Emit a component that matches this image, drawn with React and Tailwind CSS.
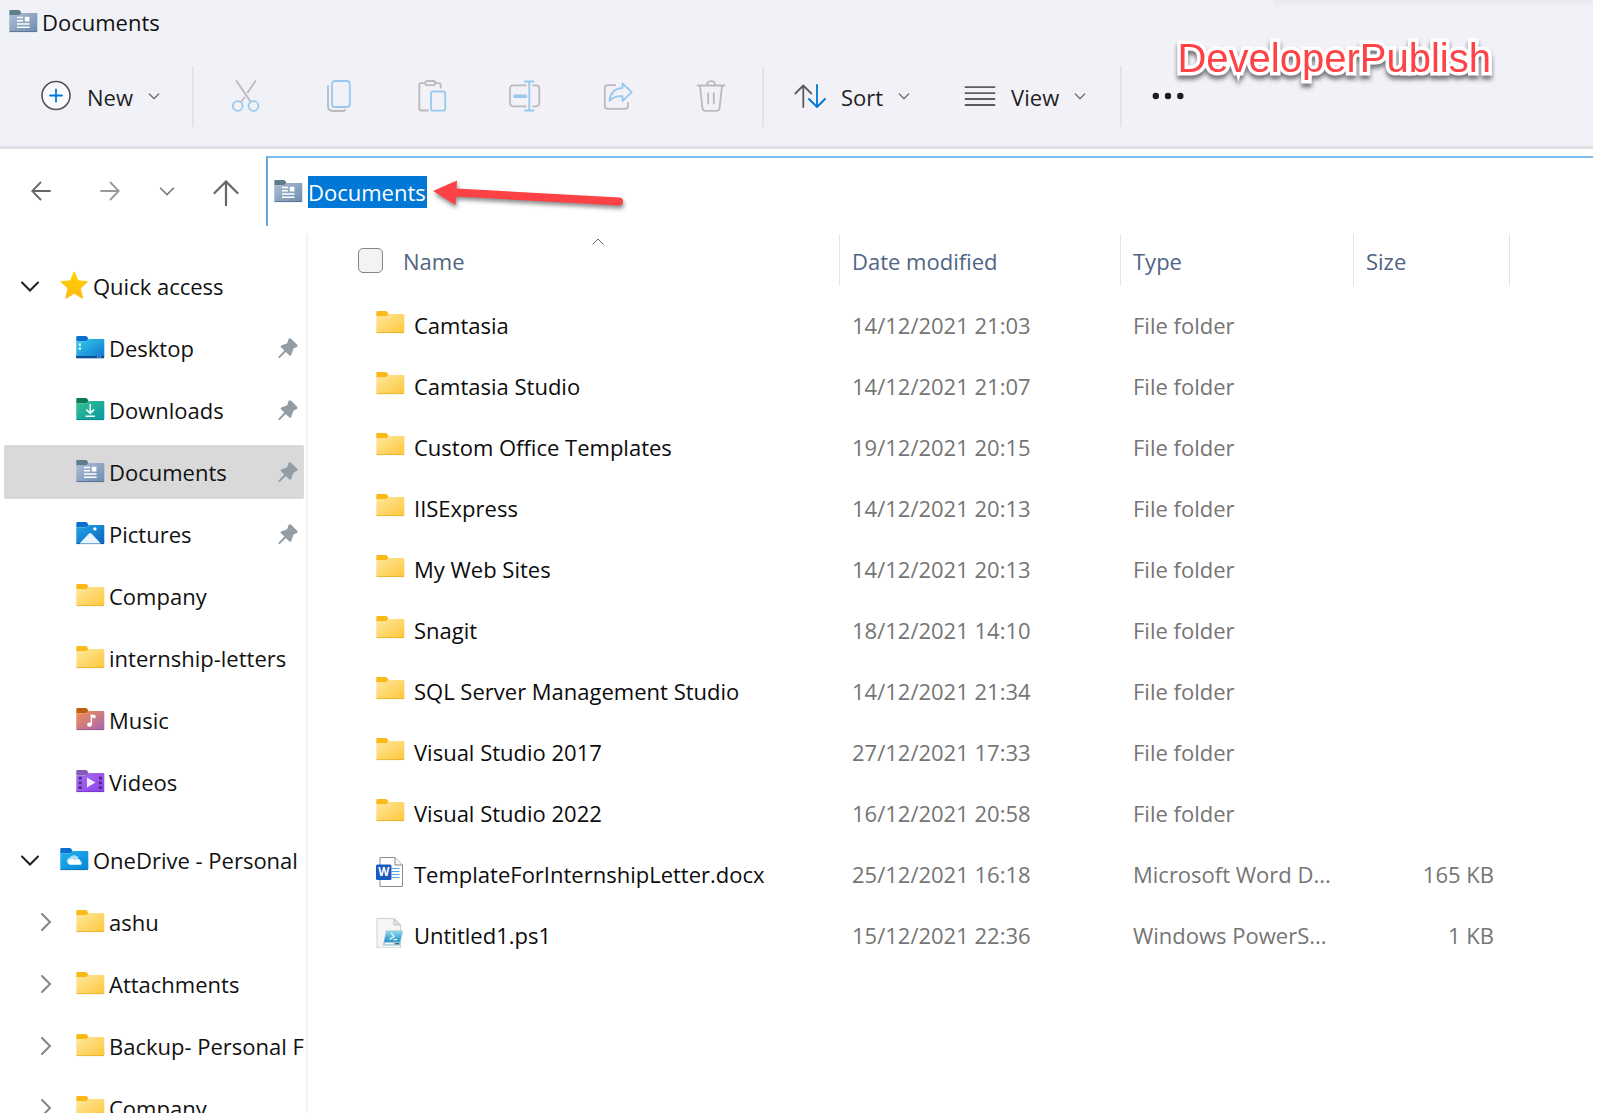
import React, { useState } from 'react';

const folderColors = {
  plain: { tab: '#fbb917', from: '#ffe8a0', to: '#fdc73a', edge: '#e9b12d' },
  desktop: { tab: '#0a6fd0', from: '#35cdea', to: '#0f74cf', edge: '#0a4f97' },
  downloads: { tab: '#0a7a58', from: '#36c391', to: '#0697a4', edge: '#0a8583' },
  documents: { tab: '#5f7e8a', from: '#aebfd6', to: '#6d8bb0', edge: '#586f8e' },
  pictures: { tab: '#0a6fd0', from: '#21a6e8', to: '#0b62bd', edge: '#0b57a8' },
  music: { tab: '#bf5f14', from: '#f5904f', to: '#a564b4', edge: '#8c5391' },
  videos: { tab: '#8459b8', from: '#a96bf0', to: '#8d44ea', edge: '#7434cb' },
  onedrive: { tab: '#0a6fd0', from: '#1fb2ee', to: '#0a86d8', edge: '#0a73bd' },
};

const folderGlyphs = {
  plain: null,
  desktop: (
    <>
      <path d="M0 23h28v1.5a.8.8 0 0 1-.8.8H.8a.8.8 0 0 1-.8-.8z" fill="#0b4e98" />
      <path d="M2.7 10.5h2.2v2.2H2.7zM2.7 14.6h2.2v2.2H2.7z" fill="#fff" />
      <path d="M21 23.4h1.4v1H21zM23.6 23.4H25v1h-1.4z" fill="#bfe3ff" />
    </>
  ),
  downloads: (
    <path
      d="M14.2 9v9M10.4 14.6l3.8 3.8 3.8-3.8M9.6 21.2h9.2"
      fill="none"
      stroke="#fff"
      strokeWidth="1.5"
    />
  ),
  documents: (
    <path
      d="M8 9.8h6v1.4H8zM8 13h6v1.4H8zM15.8 9.8h4.6v4.6h-4.6zM8 16.2h12.6v1.5H8zM8 19.6h12.6v1.5H8z"
      fill="#fff"
    />
  ),
  pictures: (
    <>
      <path d="M3.6 24.4 13 14.6q1.2-1.1 2.4 0l9.4 9.8z" fill="#eaf6ff" />
      <circle cx="18.9" cy="9.9" r="1.7" fill="#fff" />
    </>
  ),
  music: (
    <>
      <ellipse cx="13.4" cy="19.7" rx="2.4" ry="2.1" fill="#fff" />
      <path d="M14.6 9.2v10.6h1.5v-7.2l3.4.7v-3.1z" fill="#fff" />
    </>
  ),
  videos: (
    <>
      <path d="M11 10.5v10l8.4-5z" fill="#f3eaff" />
      <path
        d="M2.7 9.8h3v2.8h-3zM2.7 14.5h3v2.8h-3zM2.7 19.2h3V22h-3zM22.9 9.8h3v2.8h-3zM22.9 14.5h3v2.8h-3zM22.9 19.2h3V22h-3z"
        fill="#4d2a86"
      />
    </>
  ),
  onedrive: (
    <>
      <path d="M9.5 19.4a3.6 3.6 0 0 1 .2-7 5.2 5.2 0 0 1 8.9.6z" fill="#a9ddf8" />
      <path
        d="M9.6 19.8a3.2 3.2 0 0 1 0-5.4q3.2-1.2 5.4 1 1.4-1.6 3.4-1.3 2 .4 2.2 2.4a1.7 1.7 0 0 1-.6 3.3z"
        fill="#fff"
      />
    </>
  ),
};

const FolderIcon = ({ type = 'plain' }) => {
  const c = folderColors[type];
  const id = React.useId();
  return (
    <svg className="w-[30px] h-[30px] shrink-0" viewBox="0 0 30 30" aria-hidden="true">
      <defs>
        <linearGradient id={id} x1="0" y1="0" x2="1" y2="1">
          <stop offset="0" stopColor={c.from} />
          <stop offset="1" stopColor={c.to} />
        </linearGradient>
      </defs>
      <path d="M.3 4.3a1.2 1.2 0 0 1 1.2-1.2h8.3q.8 0 1.3.6L12.4 5.5 11 8.5H.3z" fill={c.tab} />
      <path
        d="M.3 8.4h8.8q.9 0 1.5-.6l1.4-1.2q.5-.5 1.2-.5h14.4q.7 0 .7.7v17.5q0 .7-.7.7H1q-.7 0-.7-.7z"
        fill={`url(#${id})`}
      />
      <path d="M.6 24.6h27.4" stroke={c.edge} strokeWidth="0.9" />
      {folderGlyphs[type]}
    </svg>
  );
};

const StarIcon = () => (
  <svg className="w-[30px] h-[30px] shrink-0" viewBox="0 0 30 30" aria-hidden="true">
    <defs>
      <linearGradient id="star" x1="0" y1="0" x2="0" y2="1">
        <stop offset="0" stopColor="#ffd400" />
        <stop offset="1" stopColor="#ffb90f" />
      </linearGradient>
    </defs>
    <path
      d="M14.2.8 18 9.8 27.6 10.7 20.4 17.2 22.6 27.4 14.2 22.2 5.8 27.4 8 17.2.8 10.7 10.4 9.8z"
      fill="url(#star)"
      stroke="url(#star)"
      strokeLinejoin="round"
    />
  </svg>
);

const WordIcon = () => (
  <svg className="w-[30px] h-[30px] shrink-0" viewBox="0 0 30 30" aria-hidden="true">
    <path d="M4 .5h15l7.500 7.500v21.500H4z" fill="#fff" stroke="#8a8a8a" />
    <path d="M19 .5V8h7.500" fill="#f4f4f4" stroke="#8a8a8a" />
    <path d="M16 11.500h7.500M16 14.500h7.500M16 17.500h7.500M16 20.500h7.500" stroke="#5aa0ea" strokeWidth="1.100" />
    <rect x="0" y="7.500" width="15.500" height="15.500" rx="1.500" fill="#185abd" />
    <text
      x="7.700"
      y="19.400"
      fontSize="11.500"
      fontWeight="700"
      fill="#fff"
      textAnchor="middle"
      fontFamily="Open Sans, sans-serif"
    >
      W
    </text>
  </svg>
);

const PowerShellIcon = () => (
  <svg className="w-[30px] h-[30px] shrink-0" viewBox="0 0 30 30" aria-hidden="true">
    <defs>
      <linearGradient id="ps" x1="0" y1="0" x2="0" y2="1">
        <stop offset="0" stopColor="#8ed6ec" />
        <stop offset="1" stopColor="#1a93c8" />
      </linearGradient>
    </defs>
    <path d="M1 .5h17l6.500 6.500v23H1z" fill="#f5f5f5" stroke="#d0d0d0" />
    <path d="M18 .5V7h6.500z" fill="#e2e2e2" stroke="#c2c2c2" />
    <path d="M10 12.500h17.200l-3.400 15H6.800z" fill="#9fc3d3" />
    <path d="M10.600 13.300h15.700l-2.400 10.500H8.200z" fill="url(#ps)" />
    <path d="M15.200 15.200l3 3.200-4.600 3.200M17.600 21.600h3.600" fill="none" stroke="#fff" strokeWidth="1.200" />
    <path d="M9 25.700h8.500" stroke="#fff" strokeWidth="1.200" />
    <path d="M19.500 25.700h3.500" stroke="#1f5d7a" strokeWidth="1.200" />
  </svg>
);

const PinIcon = () => (
  <svg className="w-5 h-5 shrink-0" viewBox="0 0 20 20" aria-hidden="true">
    <path
      d="M10.600.8q1.200-1.200 2.500 0l6 6q1.200 1.300-.3 2.200l-3.200 1.500-2.400 6.500q-.7 1.400-1.800.4L7.800 13.900 2 19.700q-.7.400-1.200.2-.6-.6-.3-1.200l5.800-6.200L3 9.200q-1-1.200.3-1.800l5.900-2.100z"
      fill="#929da5"
    />
  </svg>
);

const ChevronDown = ({ className }) => (
  <svg className={className} viewBox="0 0 20 20" fill="none" stroke="currentColor" aria-hidden="true">
    <path d="M2 6.500l8 8 8-8" strokeLinecap="round" />
  </svg>
);

const ChevronRight = () => (
  <svg
    className="w-5 h-5 text-[#858585]"
    viewBox="0 0 20 20"
    fill="none"
    stroke="currentColor"
    strokeWidth="2"
    aria-hidden="true"
  >
    <path d="M6 2l8 8-8 8" strokeLinecap="round" />
  </svg>
);

const ToolIcon = ({ children }) => (
  <svg
    className="w-8 h-8 shrink-0"
    viewBox="0 0 32 32"
    fill="none"
    strokeWidth="1.800"
    strokeLinecap="round"
    strokeLinejoin="round"
    aria-hidden="true"
  >
    {children}
  </svg>
);

const GRAY = '#b9babe';
const BLUE = '#99c8ee';

const fileActions = [
  {
    label: 'Cut',
    icon: (
      <>
        <path d="M6.500 1l14 20.500M25.500 1l-7.600 11.200M14.500 17.500l-3.500 4.500" stroke={GRAY} />
        <circle cx="7.700" cy="26" r="4.900" stroke={BLUE} />
        <circle cx="23.500" cy="26" r="4.900" stroke={BLUE} />
      </>
    ),
  },
  {
    label: 'Copy',
    icon: (
      <>
        <path d="M5 6v20q0 5 5 5h9.500q1.500 0 2.500-1" stroke={GRAY} />
        <rect x="9" y="1" width="17.800" height="26" rx="3" stroke={BLUE} />
      </>
    ),
  },
  {
    label: 'Paste',
    icon: (
      <>
        <path d="M9 3.200H5.300q-2 0-2 2v23.300q0 2 2 2H12M19.500 3.200h3.200q2 0 2 2V7.500" stroke={GRAY} />
        <rect x="9.200" y="1" width="10" height="4.200" rx="2" stroke={GRAY} />
        <rect x="15" y="11.500" width="14.200" height="19.200" rx="2" stroke={BLUE} />
      </>
    ),
  },
  {
    label: 'Rename',
    icon: (
      <>
        <path
          d="M16.500 5.300H4.500q-3.500 0-3.500 3.500v14q0 3.500 3.500 3.500h12M24 5.300h2.800q3.500 0 3.500 3.500v14q0 3.500-3.500 3.500H24"
          stroke={GRAY}
        />
        <path d="M20.300 1.500v29M16 1.500h8.600M16 30.500h8.600" stroke={BLUE} />
        <path d="M6 16.200h10.500" stroke={BLUE} strokeWidth="3.400" />
      </>
    ),
  },
  {
    label: 'Share',
    icon: (
      <>
        <path d="M13 5.200H5.800q-3 0-3 3v17.600q0 3 3 3H23q3 0 3-3v-3" stroke={GRAY} />
        <path d="M20.500 3.500l9.200 8.700-9.200 8.800v-4.800q-8-.5-13 4.600 1-12 13-13z" stroke={BLUE} />
      </>
    ),
  },
  {
    label: 'Delete',
    icon: (
      <path
        d="M2.500 5.500h27M11.800 5q.5-3.800 4.200-3.800T20.200 5M5 5.800l2.400 22q.4 3 3 3h11.200q2.600 0 3-3l2.400-22M13.200 13.500v10M18.800 13.500v10"
        stroke={GRAY}
      />
    ),
  },
];

const quickAccess = [
  { name: 'Desktop', type: 'desktop', pinned: true },
  { name: 'Downloads', type: 'downloads', pinned: true },
  { name: 'Documents', type: 'documents', pinned: true },
  { name: 'Pictures', type: 'pictures', pinned: true },
  { name: 'Company', type: 'plain' },
  { name: 'internship-letters', type: 'plain' },
  { name: 'Music', type: 'music' },
  { name: 'Videos', type: 'videos' },
];

const oneDrive = [
  { name: 'ashu', type: 'plain', nested: true },
  { name: 'Attachments', type: 'plain', nested: true },
  { name: 'Backup- Personal F', type: 'plain', nested: true },
  { name: 'Company', type: 'plain', nested: true },
];

const files = [
  { name: 'Camtasia', date: '14/12/2021 21:03', type: 'File folder' },
  { name: 'Camtasia Studio', date: '14/12/2021 21:07', type: 'File folder' },
  { name: 'Custom Office Templates', date: '19/12/2021 20:15', type: 'File folder' },
  { name: 'IISExpress', date: '14/12/2021 20:13', type: 'File folder' },
  { name: 'My Web Sites', date: '14/12/2021 20:13', type: 'File folder' },
  { name: 'Snagit', date: '18/12/2021 14:10', type: 'File folder' },
  { name: 'SQL Server Management Studio', date: '14/12/2021 21:34', type: 'File folder' },
  { name: 'Visual Studio 2017', date: '27/12/2021 17:33', type: 'File folder' },
  { name: 'Visual Studio 2022', date: '16/12/2021 20:58', type: 'File folder' },
  {
    name: 'TemplateForInternshipLetter.docx',
    date: '25/12/2021 16:18',
    type: 'Microsoft Word D...',
    size: '165 KB',
    icon: <WordIcon />,
  },
  {
    name: 'Untitled1.ps1',
    date: '15/12/2021 22:36',
    type: 'Windows PowerS...',
    size: '1 KB',
    icon: <PowerShellIcon />,
  },
];

const Separator = ({ className }) => <div className={`w-0.5 h-[61px] bg-[#e3e4e9] shrink-0 ${className}`} />;

const MenuButton = ({ label, icon, className }) => (
  <button className={`flex items-center gap-[15px] shrink-0 text-[#1f1f1f] ${className}`}>
    <ToolIcon>{icon}</ToolIcon>
    <span className="pt-0.5">{label}</span>
    <ChevronDown className="w-3 h-3 stroke-[2] text-[#5c5c5c]" />
  </button>
);

const Header = () => (
  <header className="relative border-b-3 border-[#e0e1e6] bg-linear-to-r from-[#f0f2f8] via-[#f2f1f7] to-[#f1f2f8]">
    <div className="absolute top-0 right-0 w-80 h-2 bg-linear-to-b from-[#e9eaf0] to-transparent" />
    <div className="flex items-center gap-[3px] h-11 pl-[9px]">
      <FolderIcon type="documents" />
      <h1>Documents</h1>
    </div>
    <div className="flex items-center h-[102px] pl-10 pt-0.5">
      <MenuButton
        label="New"
        icon={
          <>
            <circle cx="16" cy="15.500" r="14" fill="#fafbfd" stroke="#555" strokeWidth="1.600" />
            <path d="M16 9.500v12M10 15.500h12" stroke="#0078d4" />
          </>
        }
      />
      <Separator className="ml-8" />
      <div className="flex ml-1.5">
        {fileActions.map((action) => (
          <button key={action.label} aria-label={action.label} disabled className="flex justify-center w-[93px]">
            <ToolIcon>{action.icon}</ToolIcon>
          </button>
        ))}
      </div>
      <Separator className="ml-1" />
      <MenuButton
        label="Sort"
        className="ml-[30px]"
        icon={
          <>
            <path d="M9.300 27V5.500M1.300 13.500l8-8 8 8" stroke="#5c5c5c" />
            <path d="M23 5v22M15 19l8 8 8-8" stroke="#0078d4" />
          </>
        }
      />
      <MenuButton
        label="View"
        className="ml-[54px]"
        icon={<path d="M1.500 7.200h29M1.500 13.200h29M1.500 19h29M1.500 25h29" stroke="#5c5c5c" />}
      />
      <Separator className="ml-[34px]" />
      <button aria-label="See more" className="ml-[30px]">
        <ToolIcon>
          <g fill="#1b1b1b">
            <circle cx="3.800" cy="16" r="3.200" />
            <circle cx="16" cy="16" r="3.200" />
            <circle cx="28.300" cy="16" r="3.200" />
          </g>
        </ToolIcon>
      </button>
    </div>

    {/* Watermark */}
    <div className="absolute top-9 right-[102px] font-['Liberation_Sans',sans-serif] text-[40px] leading-[44px] text-[#ff4245] [-webkit-text-stroke:7px_white] [paint-order:stroke_fill] [stroke-linejoin:round] drop-shadow-[0_4px_2px_rgb(0_0_0/0.5)]">
      DeveloperPublish
    </div>
  </header>
);

const AddressBar = () => {
  const [path, setPath] = useState('Documents');

  return (
    <div className="flex pt-[7px] pb-2">
      <div className="flex items-center w-[266px] shrink-0 pl-1.5">
        <button aria-label="Back" className="flex justify-center w-[69px]">
          <svg className="w-5 h-5" viewBox="0 0 20 20" fill="none" stroke="#666" strokeWidth="1.800" strokeLinecap="round">
            <path d="M19 10H1.500M9.500 1.500L1.200 10l8.300 8.500" />
          </svg>
        </button>
        <button aria-label="Forward" className="flex justify-center w-[69px]">
          <svg className="w-5 h-5" viewBox="0 0 20 20" fill="none" stroke="#999" strokeWidth="1.800" strokeLinecap="round">
            <path d="M1 10h17.500M10.500 1.500l8.300 8.500-8.300 8.500" />
          </svg>
        </button>
        <button aria-label="Recent locations" className="flex justify-center w-[46px]">
          <ChevronDown className="w-4 h-4 stroke-[2] text-[#777]" />
        </button>
        <button aria-label="Up" className="flex justify-center w-[72px] pt-1">
          <svg className="w-[26px] h-[26px]" viewBox="0 0 26 26" fill="none" stroke="#666" strokeWidth="2.200" strokeLinecap="round">
            <path d="M13 25V2M1.500 13L13 1.500 24.500 13" />
          </svg>
        </button>
      </div>
      <div className="flex items-center grow h-[70px] pl-1.5 border-t-2 border-l-2 border-t-[#7fbcec] border-l-[#5fa8e0]">
        <FolderIcon type="documents" />
        <input
          aria-label="Address"
          value={path}
          onChange={(e) => setPath(e.target.value)}
          className="field-sizing-content h-8 ml-1 pr-px bg-[#0078d7] text-white outline-none"
        />
        <svg
          className="w-[200px] h-10 drop-shadow-[1px_3px_2px_rgb(0_0_0/0.45)]"
          viewBox="0 0 200 40"
          fill="#fd4245"
          aria-hidden="true"
        >
          <path d="M6 19l24-10.500L28.500 33z" />
          <path d="M29 20.500l163 9" stroke="#fd4245" strokeWidth="8" strokeLinecap="round" />
        </svg>
      </div>
    </div>
  );
};

const TreeHeader = ({ name, icon }) => (
  <button className="flex items-center h-[62px] w-full pl-5 whitespace-nowrap">
    <ChevronDown className="w-5 h-5 stroke-[2] text-[#1f1f1f]" />
    <span className="ml-5">{icon}</span>
    <span className="ml-[3px]">{name}</span>
  </button>
);

const TreeItem = ({ item, selected }) => (
  <li className="py-1 pl-1 pr-0.5">
    <button
      className={`flex items-center w-full h-[54px] pl-8 pr-1.5 rounded-xs whitespace-nowrap overflow-hidden ${
        selected ? 'bg-[#d9d9d9]' : ''
      }`}
    >
      <span className="w-5 shrink-0">{item.nested && <ChevronRight />}</span>
      <span className="ml-5">
        <FolderIcon type={item.type} />
      </span>
      <span className="ml-[3px] grow text-left">{item.name}</span>
      {item.pinned && <PinIcon />}
    </button>
  </li>
);

const Sidebar = () => (
  <nav className="w-[308px] shrink-0 pt-[21px] border-r-2 border-[#f4f4f4] overflow-hidden">
    <TreeHeader name="Quick access" icon={<StarIcon />} />
    <ul>
      {quickAccess.map((item) => (
        <TreeItem key={item.name} item={item} selected={item.name === 'Documents'} />
      ))}
    </ul>
    <div className="mt-4">
      <TreeHeader name="OneDrive - Personal" icon={<FolderIcon type="onedrive" />} />
      <ul>
        {oneDrive.map((item) => (
          <TreeItem key={item.name} item={item} />
        ))}
      </ul>
    </div>
  </nav>
);

const FileTable = () => (
  <main className="grow pr-[83px]">
    <table className="w-full table-fixed text-left text-[#757575]">
      <thead>
        <tr className="text-[#4f6484]">
          <th className="relative p-0 pb-2 font-normal">
            <svg
              className="absolute top-1 left-1/2 w-3 h-2 ml-[18px]"
              viewBox="0 0 12 8"
              fill="none"
              stroke="#6a6a6a"
              aria-hidden="true"
            >
              <path d="M.5 6.500L6 1l5.500 5.500" />
            </svg>
            <div className="flex items-center h-[52px] pl-[50px] border-r border-[#e5e5e5]">
              <input
                type="checkbox"
                aria-label="Select all"
                className="appearance-none w-[25px] h-[25px] border border-[#858585] rounded-[5px] bg-[#f3f3f3]"
              />
              <span className="ml-5 pt-0.5">Name</span>
            </div>
          </th>
          <th className="w-[281px] p-0 pb-2 font-normal">
            <div className="flex items-center h-[52px] pl-3 pt-0.5 border-r border-[#e5e5e5]">Date modified</div>
          </th>
          <th className="w-[233px] p-0 pb-2 font-normal">
            <div className="flex items-center h-[52px] pl-3 pt-0.5 border-r border-[#e5e5e5]">Type</div>
          </th>
          <th className="w-[156px] p-0 pb-2 font-normal">
            <div className="flex items-center h-[52px] pl-3 pt-0.5 border-r border-[#e5e5e5]">Size</div>
          </th>
        </tr>
      </thead>
      <tbody>
        {files.map((file) => (
          <tr key={file.name} className="h-[61px] whitespace-nowrap">
            <td className="p-0 pl-[68px]">
              <div className="flex items-center gap-2 text-[#0c0c0c]">
                <span className="pb-1">{file.icon || <FolderIcon />}</span>
                <span>{file.name}</span>
              </div>
            </td>
            <td className="p-0 pl-3">{file.date}</td>
            <td className="p-0 pl-3">{file.type}</td>
            <td className="p-0 pr-4 text-right">{file.size}</td>
          </tr>
        ))}
      </tbody>
    </table>
  </main>
);

const App = () => (
  <div className="flex flex-col h-screen pr-[7px] overflow-hidden bg-white font-['Open_Sans',sans-serif] text-[22px] leading-[30px] text-[#111]">
    <Header />
    <AddressBar />
    <div className="flex grow min-h-0">
      <Sidebar />
      <FileTable />
    </div>
  </div>
);

export default App;
